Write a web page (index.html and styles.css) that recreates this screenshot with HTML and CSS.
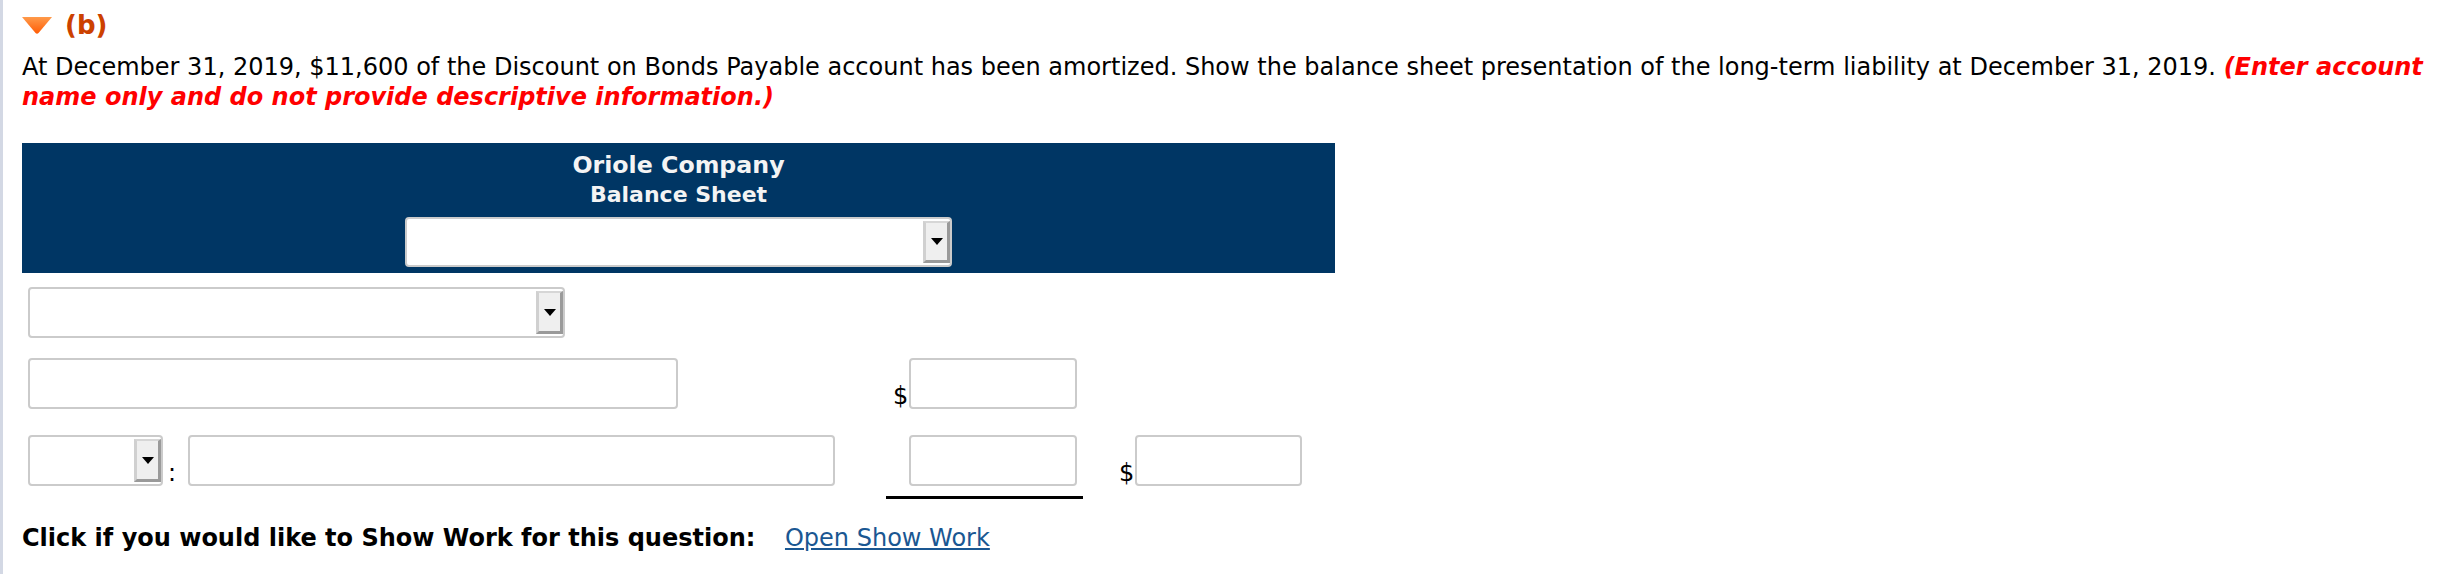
FILE: index.html
```html
<!DOCTYPE html>
<html lang="en">
<head>
<meta charset="utf-8">
<title>Oriole Company - Balance Sheet</title>
<link rel="stylesheet" href="styles.css">
</head>
<body>
<div class="page">
  <div class="part-head">
    <svg class="toggle" width="30" height="17" viewBox="0 0 30 17" aria-hidden="true">
      <defs>
        <linearGradient id="tg" x1="0" y1="0" x2="0" y2="1">
          <stop offset="0" stop-color="#ff9a4a"/>
          <stop offset="1" stop-color="#ff5c05"/>
        </linearGradient>
      </defs>
      <path d="M0 0 H30 L16.5 16 Q15 17.5 13.5 16 Z" fill="url(#tg)"/>
    </svg>
    <span class="part-label">(b)</span>
  </div>
  <p class="question">At December 31, 2019, $11,600 of the Discount on Bonds Payable account has been amortized. Show the balance sheet presentation of the long-term liability at December 31, 2019. <em class="note">(Enter account name only and do not provide descriptive information.)</em></p>

  <div class="sheet-head">
    <div class="company">Oriole Company</div>
    <div class="title">Balance Sheet</div>
    <div class="select select-date"><span class="arrow"></span></div>
  </div>

  <div class="rows">
    <div class="row row-1">
      <div class="select select-wide"><span class="arrow"></span></div>
    </div>
    <div class="row row-2">
      <div class="col-a"><input class="field field-name" type="text"></div>
      <div class="col-b"><span class="dollar">$</span><input class="field field-num" type="text"></div>
    </div>
    <div class="row row-3">
      <div class="col-a">
        <div class="select select-small"><span class="arrow"></span></div>
        <span class="colon">:</span>
        <input class="field field-name2" type="text">
      </div>
      <div class="col-b col-b-ruled"><span class="dollar hidden">$</span><input class="field field-num" type="text"></div>
      <div class="col-c"><span class="dollar">$</span><input class="field field-num2" type="text"></div>
    </div>
  </div>

  <div class="show-work">
    <span class="show-label">Click if you would like to Show Work for this question:</span>
    <a class="show-link" href="#">Open Show Work</a>
  </div>
</div>
</body>
</html>
```

FILE: styles.css
```css
html, body {
  margin: 0;
  padding: 0;
  background: #fff;
}
body {
  font-family: "DejaVu Sans", Verdana, sans-serif;
  font-size: 24px;
  color: #000;
}
.page {
  border-left: 3px solid #d3d8e4;
  min-height: 574px;
  box-sizing: border-box;
  padding: 10px 16px 0 19px;
}
.part-head {
  display: flex;
  align-items: center;
  height: 30px;
}
.toggle {
  display: block;
  margin-right: 13px;
}
.part-label {
  font-weight: bold;
  color: #cc4100;
  font-size: 26px;
}
.question {
  margin: 12px 0 0 0;
  line-height: 30px;
}
.note {
  color: #f00;
  font-weight: bold;
}
.sheet-head {
  margin-top: 31px;
  width: 1313px;
  height: 130px;
  box-sizing: border-box;
  background: #003664;
  color: #fff;
  padding-top: 7px;
  display: flex;
  flex-direction: column;
  align-items: center;
}
.company, .title {
  font-weight: bold;
  line-height: 30px;
  color: #f4f4f4;
}
.company { font-size: 23.7px; }
.title { font-size: 22px; }
.select {
  box-sizing: border-box;
  height: 51px;
  border: 2px solid #cbcbcb;
  border-radius: 4px;
  background: #fff;
  display: flex;
  justify-content: flex-end;
  padding: 2px 0 2px 0;
}
.select-date {
  margin-top: 7px;
  width: 547px;
  height: 50px;
}
.arrow {
  width: 27px;
  box-sizing: border-box;
  background: #efefef;
  border-top: 2px solid #d6d6d6;
  border-left: 3px solid #d0d0d0;
  border-right: 3px solid #9a9a9a;
  border-bottom: 3px solid #9a9a9a;
  display: flex;
  align-items: center;
  justify-content: center;
}
.arrow::before {
  content: "";
  width: 0;
  height: 0;
  border-left: 6px solid transparent;
  border-right: 6px solid transparent;
  border-top: 7px solid #000;
}
.rows {
  padding-left: 6px;
  margin-top: 14px;
}
.row {
  display: flex;
  align-items: flex-end;
}
.select-wide { width: 537px; }
.row-2 { margin-top: 20px; }
.row-3 { margin-top: 26px; }
.col-a {
  width: 858px;
  display: flex;
  align-items: flex-end;
}
.col-b {
  width: 197px;
  box-sizing: border-box;
  display: flex;
  align-items: flex-end;
  padding-left: 7px;
}
.col-b-ruled {
  border-bottom: 3px solid #000;
  padding-bottom: 10px;
  margin-bottom: -13px;
}
.col-c {
  margin-left: 36px;
  display: flex;
  align-items: flex-end;
}
.dollar {
  width: 16px;
  line-height: 24px;
  padding-bottom: 1px;
  overflow: visible;
  white-space: nowrap;
}
.hidden { visibility: hidden; }
.field {
  box-sizing: border-box;
  height: 51px;
  border: 2px solid #cbcbcb;
  border-radius: 4px;
  background: #fff;
  margin: 0;
  padding: 0 6px;
  font: inherit;
  outline: none;
}
.field-name { width: 650px; }
.field-num { width: 168px; }
.field-num2 { width: 167px; }
.select-small { width: 135px; }
.colon {
  width: 25px;
  padding-left: 5px;
  box-sizing: border-box;
  line-height: 24px;
  padding-bottom: 1px;
}
.field-name2 { width: 647px; }
.show-work {
  margin-top: 37px;
  line-height: 30px;
}
.show-label {
  font-weight: bold;
}
.show-link {
  margin-left: 22px;
  color: #1a5792;
  text-decoration: underline;
}
```
